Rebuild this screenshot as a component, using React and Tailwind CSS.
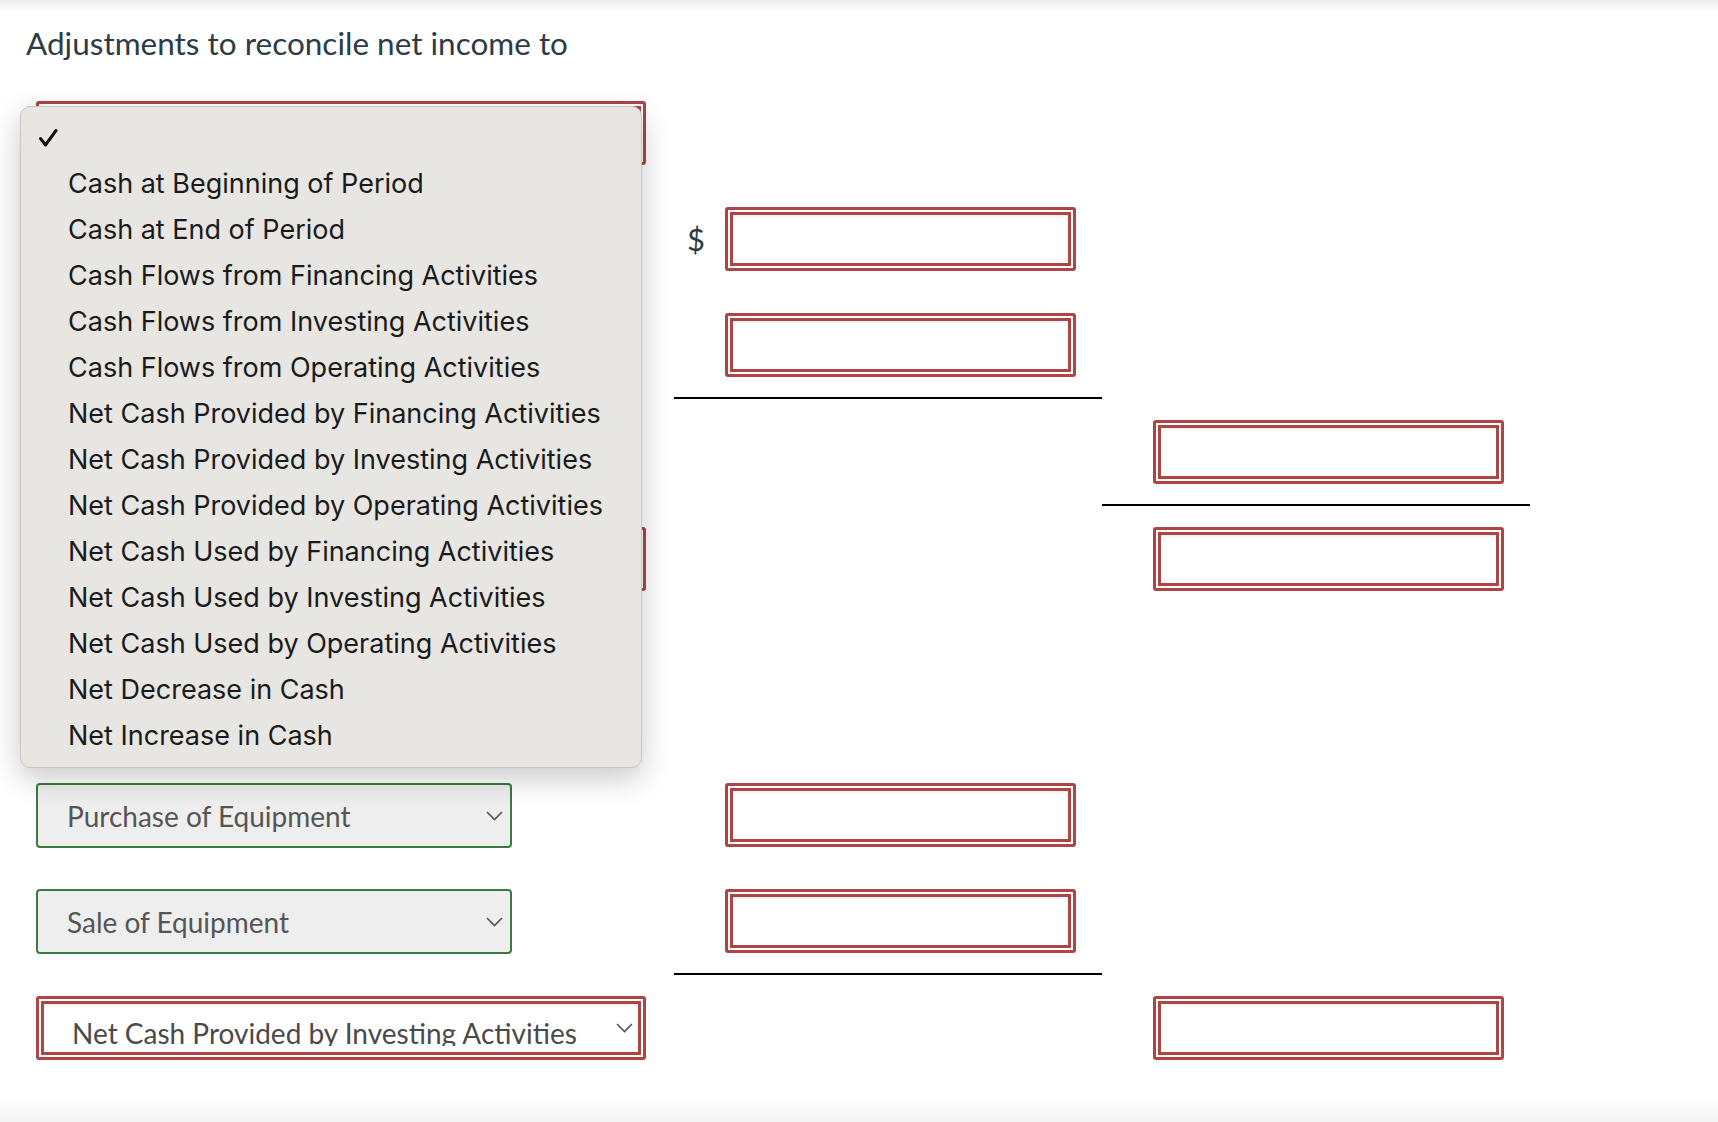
import { ChevronDown } from 'lucide-react'

// 메뉴 항목
const options = [
    'Cash at Beginning of Period',
    'Cash at End of Period',
    'Cash Flows from Financing Activities',
    'Cash Flows from Investing Activities',
    'Cash Flows from Operating Activities',
    'Net Cash Provided by Financing Activities',
    'Net Cash Provided by Investing Activities',
    'Net Cash Provided by Operating Activities',
    'Net Cash Used by Financing Activities',
    'Net Cash Used by Investing Activities',
    'Net Cash Used by Operating Activities',
    'Net Decrease in Cash',
    'Net Increase in Cash',
]

// 빨간 이중 테두리 입력칸
function RedBox({ className = 'w-[351px]', children }) {
    return (
        <div className={`${className} h-[64px] border-[3px] border-[#ae4444] rounded-[3px] p-[2px] bg-white`}>
            <div className="h-full border-[3px] border-[#ae4444] shadow-[inset_0_2px_2px_rgba(0,0,0,0.06)] relative overflow-hidden">
                {children}
            </div>
        </div>
    )
}

function Chevron() {
    return (
        <svg width="17" height="10" viewBox="0 0 17 10" className="shrink-0">
            <path d="M1 1 L8.5 8.5 L16 1" fill="none" stroke="#555" strokeWidth="1.6" />
        </svg>
    )
}

// 초록 테두리 셀렉트
function GreenSelect({ label }) {
    return (
        <div className="w-[476px] h-[65px] border-2 border-[#3b7a3e] rounded-[4px] bg-[#eeeeee] flex items-center pl-[29px] pr-[7px]">
            <span className="flex-1 text-[28px] text-[#555555]">{label}</span>
            <Chevron />
        </div>
    )
}

function Cell({ line, children }) {
    return (
        <div className={`w-[428px] pt-[21px] flex items-center ${line ? 'pb-[20px] border-b-2 border-black' : 'pb-[21px]'}`}>
            {children}
        </div>
    )
}

function App() {
    return (
        <div className="min-h-[1122px] bg-white flex flex-col relative" style={{ fontFamily: 'Lato, "Noto Sans", sans-serif' }}>

            {/* 상단 그림자 */}
            <div className="h-[12px] bg-gradient-to-b from-[#ececec] to-white" />

            {/* 제목 */}
            <h1 className="mt-[12px] pl-[26px] text-[31.5px] leading-[38px] text-[#2d3b45]">
                Adjustments to reconcile net income to
            </h1>

            {/* 표 */}
            <div className="mt-[18px] pl-[36px] flex flex-col">

                <div className="flex">
                    <div className="w-[638px] pt-[21px] pb-[21px]">
                        <RedBox className="w-[610px]" />
                    </div>
                    <Cell />
                    <Cell />
                </div>

                <div className="flex">
                    <div className="w-[638px]" />
                    <Cell>
                        <span className="w-[51px] pl-[13px] text-[31px] text-[#2d3b45]">$</span>
                        <RedBox />
                    </Cell>
                    <Cell />
                </div>

                <div className="flex items-start">
                    <div className="w-[638px]" />
                    <Cell line>
                        <div className="w-[51px]" />
                        <RedBox />
                    </Cell>
                    <Cell />
                </div>

                <div className="flex items-start">
                    <div className="w-[638px]" />
                    <Cell />
                    <Cell line>
                        <div className="w-[51px]" />
                        <RedBox />
                    </Cell>
                </div>

                <div className="flex">
                    <div className="w-[638px] pt-[21px] pb-[21px]">
                        <RedBox className="w-[610px]" />
                    </div>
                    <Cell />
                    <Cell>
                        <div className="w-[51px]" />
                        <RedBox />
                    </Cell>
                </div>

                <div className="h-[150px]" />

                <div className="flex">
                    <div className="w-[638px] pt-[21px] pb-[20px]">
                        <GreenSelect label="Purchase of Equipment" />
                    </div>
                    <Cell>
                        <div className="w-[51px]" />
                        <RedBox />
                    </Cell>
                    <Cell />
                </div>

                <div className="flex items-start">
                    <div className="w-[638px] pt-[21px] pb-[20px]">
                        <GreenSelect label="Sale of Equipment" />
                    </div>
                    <Cell line>
                        <div className="w-[51px]" />
                        <RedBox />
                    </Cell>
                    <Cell />
                </div>

                <div className="flex">
                    <div className="w-[638px] pt-[21px] pb-[21px]">
                        <RedBox className="w-[610px]">
                            <div className="flex h-full">
                                <div className="flex-1 h-[42px] overflow-hidden pl-[28px] pt-[15px]">
                                    <div className="text-[28px] leading-[28px] text-[#4a4a4a] whitespace-nowrap">
                                        Net Cash Provided by Investing Activities
                                    </div>
                                </div>
                                <div className="pr-[5px] flex items-center">
                                    <Chevron />
                                </div>
                            </div>
                        </RedBox>
                    </div>
                    <Cell />
                    <Cell>
                        <div className="w-[51px]" />
                        <RedBox />
                    </Cell>
                </div>
            </div>

            <div className="flex-1" />
            {/* 하단 띠 */}
            <div className="h-[26px] bg-gradient-to-b from-white to-[#f4f4f4]" />

            {/* 열린 드롭다운 메뉴 */}
            <div
                className="absolute left-[20px] top-[106px] w-[622px] bg-[#e8e6e3] border border-[#c9c7c4] rounded-[10px] py-[8px] shadow-[0_10px_30px_rgba(0,0,0,0.22)]"
                style={{ fontFamily: 'Inter, "Noto Sans", sans-serif' }}
            >
                <div className="h-[46px] flex items-center pl-[17px]">
                    <svg width="21" height="20" viewBox="0 0 21 20">
                        <path d="M2.5 10.5 L7.5 17 L18 2.5" fill="none" stroke="#111" strokeWidth="3" strokeLinecap="round" strokeLinejoin="round" />
                    </svg>
                </div>
                {options.map((o) => (
                    <div key={o} className="h-[46px] flex items-center pl-[47px] text-[27px] text-[#1a1a1a]">
                        {o}
                    </div>
                ))}
            </div>
        </div>
    )
}

export default App
